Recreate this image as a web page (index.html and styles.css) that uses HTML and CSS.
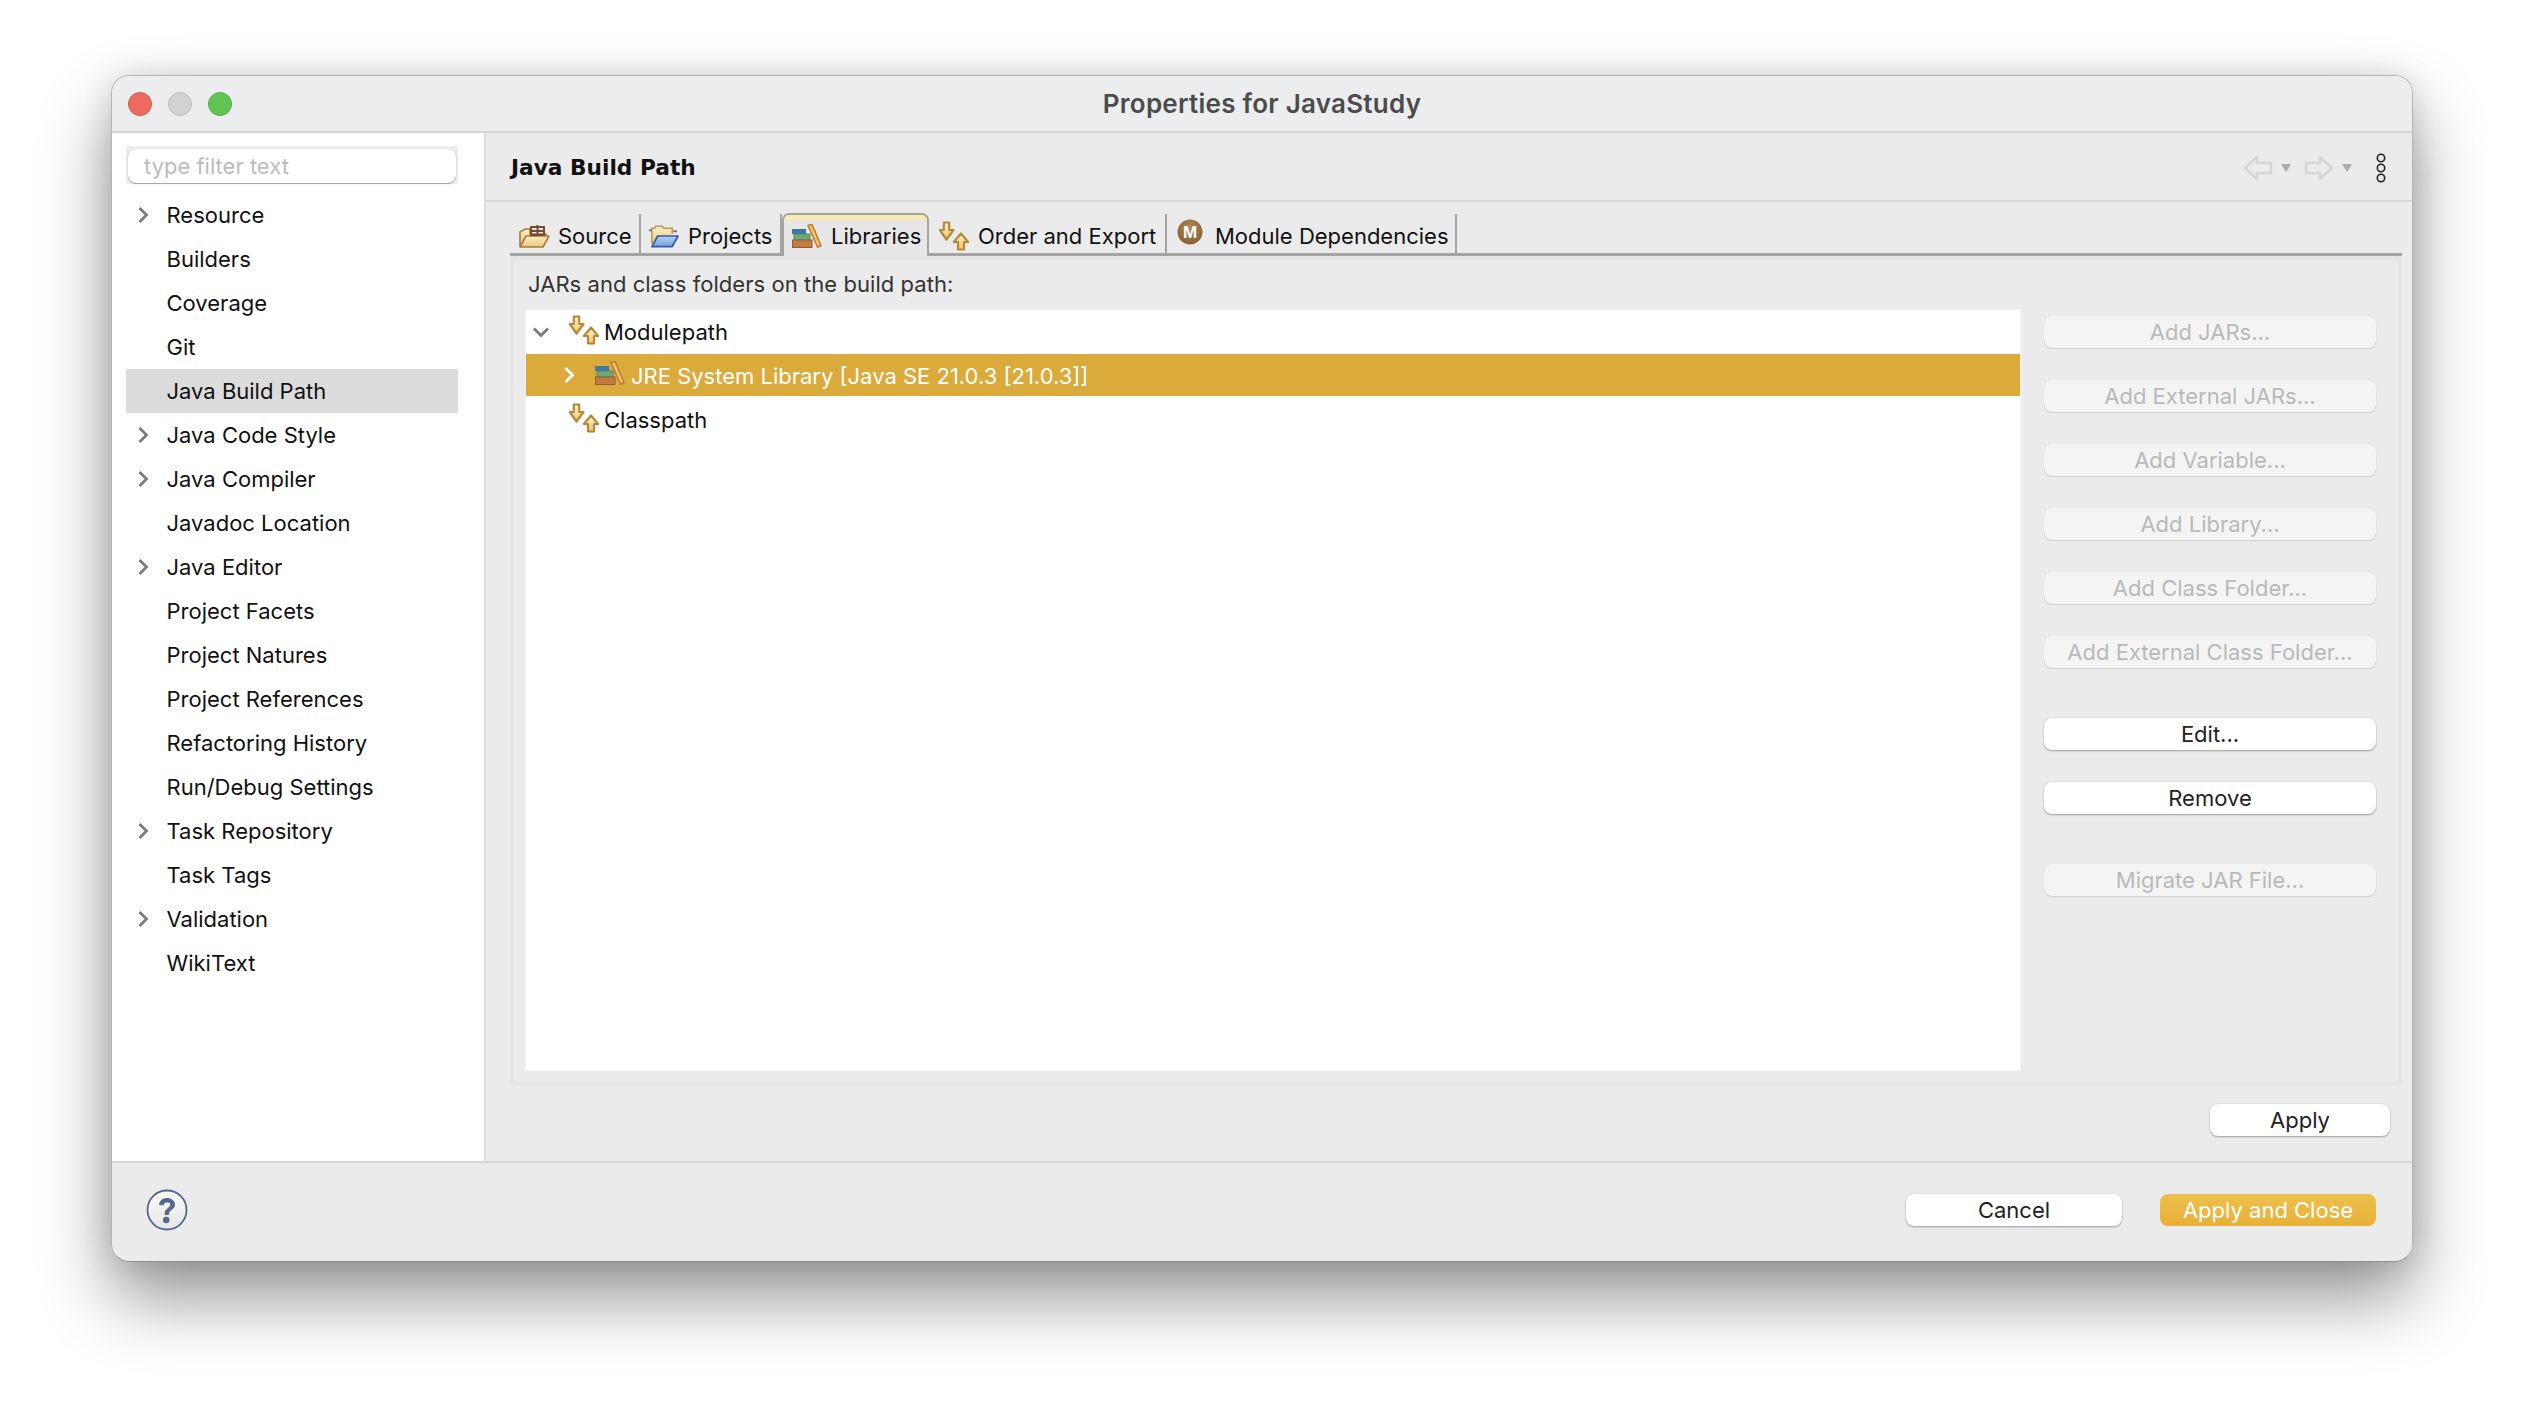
FILE: index.html
```html
<!DOCTYPE html>
<html lang="en">
<head>
<meta charset="utf-8">
<title>Properties for JavaStudy</title>
<link rel="stylesheet" href="styles.css">
</head>
<body>
<svg class="defs" aria-hidden="true">
  <defs>
    <linearGradient id="gold" x1="0" y1="0" x2="0" y2="1"><stop offset="0" stop-color="#fdf3cf"/><stop offset="1" stop-color="#f0c766"/></linearGradient>
    <linearGradient id="folder" x1="0" y1="0" x2="0" y2="1"><stop offset="0" stop-color="#fdf0c4"/><stop offset="1" stop-color="#eac77e"/></linearGradient>
    <linearGradient id="blue" x1="0" y1="0" x2="0" y2="1"><stop offset="0" stop-color="#b5d3f5"/><stop offset="1" stop-color="#6f9fe0"/></linearGradient>
    <radialGradient id="brown" cx=".5" cy=".35" r=".7"><stop offset="0" stop-color="#b08a58"/><stop offset="1" stop-color="#845c2e"/></radialGradient>
    <symbol id="i-arrows" viewBox="0 0 30 30">
      <path d="M4.800 1.500h5.400v7.500h4.300L7.500 18.500.8 9h4z" fill="url(#gold)" stroke="#b5883a" stroke-width="2.200" stroke-linejoin="round"/>
      <path d="M22 12.500l7.200 8.500h-4.200v7.500h-6V21h-4.200z" fill="url(#gold)" stroke="#b5883a" stroke-width="2.200" stroke-linejoin="round"/>
    </symbol>
    <symbol id="i-lib" viewBox="0 0 30 24">
      <rect x="0" y="5" width="14" height="5" fill="#3f78a8"/>
      <rect x="2" y="10" width="16" height="6" fill="#6fa878" stroke="#4f8a5c"/>
      <rect x=".5" y="16" width="19.500" height="7.500" fill="#c07a42" stroke="#9a5c2c"/>
      <path d="M16 1.500l4-1.200 9 21.500-3.400 1.400z" fill="#efc46c" stroke="#bd7a30" stroke-width="1.500"/>
    </symbol>
    <symbol id="i-src" viewBox="0 0 31 24">
      <path d="M1 22V8l5-3h5v5h16v3" fill="url(#folder)" stroke="#a97b3c" stroke-width="1.600"/>
      <path d="M1 23l6-11h23l-6 11z" fill="url(#folder)" stroke="#a97b3c" stroke-width="1.600" stroke-linejoin="round"/>
      <path d="M12 3h13v8H12zM18.500 1v10M12 7h13" fill="none" stroke="#7a4a32" stroke-width="2"/>
    </symbol>
    <symbol id="i-prj" viewBox="0 0 32 24">
      <path d="M4 20V4h3l1-2h7l1 2h9v6" fill="url(#folder)" stroke="#b89a5c" stroke-width="1.600"/>
      <path d="M1 6h3M26 7h4" stroke="#7a7a7a" stroke-width="2"/>
      <path d="M4 23l6-11h21l-6 11z" fill="url(#blue)" stroke="#3c56a8" stroke-width="1.800" stroke-linejoin="round"/>
    </symbol>
    <symbol id="i-mod" viewBox="0 0 26 26">
      <circle cx="13" cy="13" r="12.500" fill="url(#brown)"/>
      <text x="13" y="18.500" text-anchor="middle" class="mglyph">M</text>
    </symbol>
    <symbol id="i-right" viewBox="0 0 12 18"><path d="M2.500 2l7 7-7 7" fill="none" stroke="currentColor" stroke-width="2.800"/></symbol>
    <symbol id="i-down" viewBox="0 0 18 12"><path d="M2 2.500l7 7 7-7" fill="none" stroke="currentColor" stroke-width="2.800"/></symbol>
  </defs>
</svg>

<div class="window">
  <header class="titlebar">
    <div class="lights"><span class="light red"></span><span class="light gray"></span><span class="light green"></span></div>
    <div class="wintitle">Properties for JavaStudy</div>
  </header>

  <div class="main">
    <aside class="sidebar">
      <div class="filter"><div class="filter-input">type filter text</div></div>
      <ul class="nav">
        <li class="nav-row"><span class="twist"><svg class="chev"><use href="#i-right"/></svg></span>Resource</li>
        <li class="nav-row"><span class="twist"></span>Builders</li>
        <li class="nav-row"><span class="twist"></span>Coverage</li>
        <li class="nav-row"><span class="twist"></span>Git</li>
        <li class="nav-row active"><span class="twist"></span>Java Build Path</li>
        <li class="nav-row"><span class="twist"><svg class="chev"><use href="#i-right"/></svg></span>Java Code Style</li>
        <li class="nav-row"><span class="twist"><svg class="chev"><use href="#i-right"/></svg></span>Java Compiler</li>
        <li class="nav-row"><span class="twist"></span>Javadoc Location</li>
        <li class="nav-row"><span class="twist"><svg class="chev"><use href="#i-right"/></svg></span>Java Editor</li>
        <li class="nav-row"><span class="twist"></span>Project Facets</li>
        <li class="nav-row"><span class="twist"></span>Project Natures</li>
        <li class="nav-row"><span class="twist"></span>Project References</li>
        <li class="nav-row"><span class="twist"></span>Refactoring History</li>
        <li class="nav-row"><span class="twist"></span>Run/Debug Settings</li>
        <li class="nav-row"><span class="twist"><svg class="chev"><use href="#i-right"/></svg></span>Task Repository</li>
        <li class="nav-row"><span class="twist"></span>Task Tags</li>
        <li class="nav-row"><span class="twist"><svg class="chev"><use href="#i-right"/></svg></span>Validation</li>
        <li class="nav-row"><span class="twist"></span>WikiText</li>
      </ul>
    </aside>

    <section class="content">
      <div class="page-head">
        <h1 class="page-title">Java Build Path</h1>
        <div class="page-tools">
          <svg class="nav-arrow" viewBox="0 0 30 26"><path d="M14 2L2 13l12 11v-6h14V8H14z" fill="none" stroke="#d6d6d6" stroke-width="2.400" stroke-linejoin="round"/></svg>
          <span class="tri"></span>
          <svg class="nav-arrow second" viewBox="0 0 30 26"><path d="M16 2l12 11-12 11v-6H2V8h14z" fill="none" stroke="#d6d6d6" stroke-width="2.400" stroke-linejoin="round"/></svg>
          <span class="tri"></span>
          <svg class="dots" viewBox="0 0 10 30"><circle cx="5" cy="5" r="3.700"/><circle cx="5" cy="15" r="3.700"/><circle cx="5" cy="25" r="3.700"/></svg>
        </div>
      </div>

      <div class="tabs">
        <div class="tab t-src"><svg class="tab-icon"><use href="#i-src"/></svg>Source</div>
        <div class="tab t-prj"><svg class="tab-icon"><use href="#i-prj"/></svg>Projects</div>
        <div class="tab t-lib current"><svg class="tab-icon"><use href="#i-lib"/></svg>Libraries</div>
        <div class="tab t-ord"><svg class="tab-icon square"><use href="#i-arrows"/></svg>Order and Export</div>
        <div class="tab t-mod"><svg class="tab-icon round"><use href="#i-mod"/></svg>Module Dependencies</div>
      </div>

      <div class="panel">
        <div class="panel-label">JARs and class folders on the build path:</div>
        <div class="panel-body">
          <div class="tree">
            <div class="tree-row"><svg class="tw-down"><use href="#i-down"/></svg><svg class="tree-icon"><use href="#i-arrows"/></svg>Modulepath</div>
            <div class="tree-row selected"><svg class="tw-right"><use href="#i-right"/></svg><svg class="tree-icon lib"><use href="#i-lib"/></svg>JRE System Library [Java SE 21.0.3 [21.0.3]]</div>
            <div class="tree-row plain"><svg class="tree-icon"><use href="#i-arrows"/></svg>Classpath</div>
          </div>
          <div class="side-buttons">
            <button class="btn off">Add JARs...</button>
            <button class="btn off">Add External JARs...</button>
            <button class="btn off">Add Variable...</button>
            <button class="btn off">Add Library...</button>
            <button class="btn off">Add Class Folder...</button>
            <button class="btn off">Add External Class Folder...</button>
            <button class="btn gap-top">Edit...</button>
            <button class="btn">Remove</button>
            <button class="btn off gap-top">Migrate JAR File...</button>
          </div>
        </div>
      </div>

      <div class="apply-row"><button class="btn apply">Apply</button></div>
    </section>
  </div>

  <footer class="footer">
    <svg class="help" viewBox="0 0 42 42">
      <defs><linearGradient id="helpbg" x1="0" y1="0" x2="0" y2="1"><stop offset="0" stop-color="#fafafa"/><stop offset="1" stop-color="#e6e6e6"/></linearGradient></defs>
      <circle cx="21" cy="21" r="19.500" fill="url(#helpbg)" stroke="#56698c" stroke-width="1.800"/>
      <path d="M13.500 15.500c.5-4 3.500-6 7.500-6 4.500 0 7.500 2.500 7.500 6 0 3-1.800 4.300-3.800 5.700-1.700 1.200-2.200 2-2.200 4.300h-3.500c0-3.200.9-4.600 3-6.100 1.600-1.200 2.700-2 2.700-3.700 0-1.600-1.200-2.800-3.500-2.800-2.200 0-3.600 1.200-3.900 3z" fill="#56698c" stroke="#56698c" stroke-width="1"/>
      <circle cx="20.200" cy="31" r="3.300" fill="#56698c"/>
    </svg>
    <div class="footer-actions">
      <button class="btn cancel">Cancel</button>
      <button class="btn primary">Apply and Close</button>
    </div>
  </footer>
</div>
</body>
</html>
```
FILE: styles.css
```css
* { box-sizing: border-box; }
html, body { margin: 0; height: 100%; }
body {
  background: #fff;
  padding: 75px 111px 0;
  font-family: Inter, "Noto Sans", "Liberation Sans", sans-serif;
  font-size: 22px;
  color: #111;
  overflow: hidden;
}
.defs { position: absolute; width: 0; height: 0; }
.mglyph { font: 800 17px "Liberation Sans", sans-serif; fill: #fff; }

.window {
  width: 2302px;
  height: 1187px;
  display: flex;
  flex-direction: column;
  background: #ebebeb;
  border-radius: 18px;
  overflow: hidden;
  border: 1px solid #b4b4b4;
  border-bottom-color: #8e8e8e;
}
body::before {
  content: "";
  position: absolute;
  left: 111px; top: 75px;
  width: 2302px; height: 1187px;
  border-radius: 18px;
  box-shadow: 0 36px 70px rgba(0,0,0,.42), 0 0 30px rgba(0,0,0,.12);
  z-index: -1;
}

.titlebar {
  height: 57px;
  flex: none;
  display: flex;
  align-items: center;
  background: #ecedef;
  border-bottom: 2px solid #d5d5d5;
  position: relative;
}
.lights { display: flex; gap: 16px; padding-left: 16px; }
.light { width: 24px; height: 24px; border-radius: 50%; border: 1px solid; }
.red { background: #ec6a5e; border-color: #d8574c; }
.gray { background: #d1d2d4; border-color: #bcbcbe; }
.green { background: #61c454; border-color: #52ad47; }
.wintitle {
  position: absolute;
  left: 0; right: 0;
  text-align: center;
  font-size: 26px;
  font-weight: 600;
  letter-spacing: .25px;
  color: #4c4c4c;
}

.main { flex: 1; display: flex; min-height: 0; }

.sidebar {
  width: 374px;
  flex: none;
  background: #fff;
  border-right: 2px solid #dedede;
  padding: 13px 26px 0 14px;
}
.filter { height: 38px; background: #ececec; padding: 3px 2px 1px; }
.filter-input {
  height: 34px;
  background: #fff;
  border-radius: 8px;
  box-shadow: 0 1px 1px rgba(0,0,0,.3), 0 0 1px rgba(0,0,0,.2);
  color: #bcbcbc;
  padding-left: 16px;
  line-height: 35px;
}
.nav { list-style: none; margin: 9px 0 0; padding: 0; }
.nav-row { height: 44px; display: flex; align-items: center; color: #111; }
.nav-row.active { background: #dcdcdc; }
.twist { width: 40.500px; flex: none; display: flex; align-items: center; padding-left: 11px; color: #7b7b7b; }
.chev { width: 12px; height: 18px; }

.content { flex: 1; min-width: 0; display: flex; flex-direction: column; }

.page-head {
  height: 69px;
  flex: none;
  display: flex;
  align-items: center;
  justify-content: space-between;
  border-bottom: 2px solid #d8d8d8;
  padding: 1px 26px 0 25px;
}
.page-title {
  margin: 0;
  font: 700 21.700px "DejaVu Sans", sans-serif;
  color: #111;
}
.page-tools { display: flex; align-items: center; padding-top: 1px; }
.nav-arrow { width: 30px; height: 26px; }
.nav-arrow.second { margin-left: 13px; }
.tri {
  width: 0; height: 0;
  margin-left: 8px;
  border-left: 5px solid transparent;
  border-right: 5px solid transparent;
  border-top: 8px solid #aaa;
}
.dots { width: 10px; height: 30px; margin-left: 24px; fill: none; stroke: #222; stroke-width: 1.6; }

.tabs {
  height: 42px;
  flex: none;
  margin: 12px 10px 0 24px;
  display: flex;
  align-items: stretch;
  border-bottom: 3px solid #a4a4a4;
}
.tab {
  display: flex;
  align-items: center;
  height: 39px;
  color: #111;
  border-right: 2px solid #a4a4a4;
  padding-top: 4px;
  white-space: nowrap;
}
.tab-icon { width: 31px; height: 24px; margin-right: 9px; flex: none; }
.tab-icon.square { width: 30px; height: 30px; }
.tab-icon.round { width: 26px; height: 26px; margin-top: -8px; }
.t-src { width: 131px; padding-left: 9px; }
.t-src .tab-icon { margin-right: 8px; }
.t-prj { width: 141px; padding-left: 7px; }
.t-lib { width: 147px; }
.t-ord { width: 238px; padding-left: 10px; }
.t-ord .tab-icon { margin-right: 9px; }
.t-mod { width: 290px; padding-left: 10px; }
.t-mod .tab-icon { margin-right: 12px; }
.tab.current {
  height: 43px;
  margin-bottom: -3px;
  padding: 3px 0 2px 8px;
  background: linear-gradient(#fbe9b4, #fbe9b4) 0 0/100% 5px no-repeat #e7e7e7;
  border: 2px solid #a4a4a4;
  border-bottom: 0;
  border-radius: 7px 7px 0 0;
  position: relative;
  top: -1px;
}
.t-lib .tab-icon { width: 30px; height: 24px; margin-right: 9px; }

.panel {
  height: 830px;
  flex: none;
  margin: 0 10px 0 24px;
  border: 4px solid #e5e5e5;
  display: flex;
  flex-direction: column;
}
.panel-label {
  height: 50px;
  flex: none;
  padding: 11px 0 0 14px;
  color: #333;
  line-height: 26px;
  letter-spacing: .05px;
}
.panel-body { flex: 1; min-height: 0; display: flex; gap: 24px; padding: 0 22px 12px 12px; }

.tree { flex: 1; min-width: 0; background: #fff; box-shadow: 0 0 0 1px #f2f2f2; }
.tree-row { height: 44px; display: flex; align-items: center; color: #111; position: relative; padding-left: 43px; }
.tw-down { position: absolute; left: 6px; top: 16px; width: 18px; height: 12px; color: #7b7b7b; }
.tw-right { position: absolute; left: 37px; top: 12px; width: 12px; height: 18px; color: #fff; }
.tree-icon { width: 30px; height: 30px; margin-right: 5px; flex: none; margin-top: -4px; }
.tree-icon.lib { height: 24px; margin: -6px 6px 0 26px; }
.tree-row.selected {
  color: #fff;
  background: linear-gradient(#daab3b, #daab3b) 0 0/100% 42px no-repeat;
}

.side-buttons { width: 332px; flex: none; display: flex; flex-direction: column; padding-top: 6px; gap: 32px; }
.btn {
  display: block;
  height: 32px;
  flex: none;
  width: 100%;
  padding: 0;
  border: 0;
  border-radius: 8px;
  background: #fff;
  box-shadow: 0 1px 2px rgba(0,0,0,.32), 0 0 1px rgba(0,0,0,.12);
  font: 400 22px Inter, "Noto Sans", sans-serif;
  color: #222;
}
.btn.off { background: #f4f4f4; color: #b9b9b9; box-shadow: 0 1px 1px rgba(0,0,0,.12), 0 0 1px rgba(0,0,0,.08); }
.btn.gap-top { margin-top: 18px; }

.apply-row { flex: 1; display: flex; justify-content: flex-end; padding: 18px 22px 0 0; }
.btn.apply { width: 180px; }

.footer {
  flex: none;
  height: 100px;
  border-top: 2px solid #d8d8d8;
  display: flex;
  align-items: center;
  justify-content: space-between;
  padding: 0 36px 4px 34px;
}
.help { width: 42px; height: 42px; }
.footer-actions { display: flex; gap: 38px; }
.btn.cancel, .btn.primary { width: 216px; }
.btn.primary { background: linear-gradient(#edc04c, #e8b138); color: #fff; box-shadow: none; }
```
